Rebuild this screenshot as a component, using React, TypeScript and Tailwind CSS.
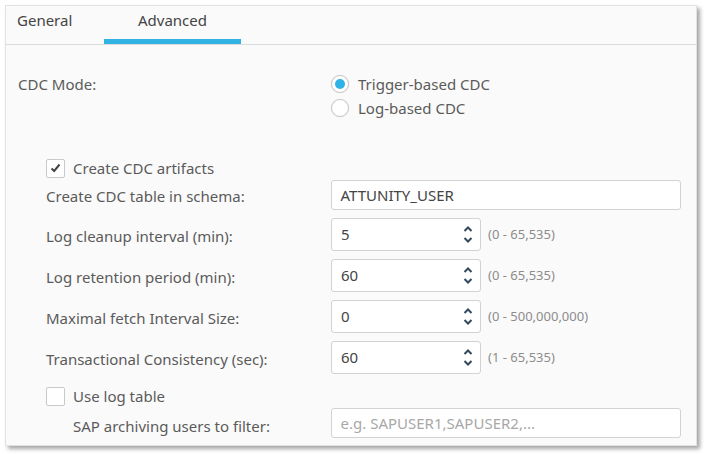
import React from 'react';

const font = { fontFamily: '"Noto Sans", "Open Sans", sans-serif' };

function Spinner() {
  return (
    <div className="flex flex-col items-center gap-[5px] mr-[7px]">
      <svg width="10" height="6" viewBox="0 0 10 6">
        <path d="M1.5 5 L5 1.5 L8.5 5" fill="none" stroke="#34495e" strokeWidth="2" />
      </svg>
      <svg width="10" height="6" viewBox="0 0 10 6">
        <path d="M1.5 1 L5 4.5 L8.5 1" fill="none" stroke="#34495e" strokeWidth="2" />
      </svg>
    </div>
  );
}

function Radio({ checked, label }: { checked?: boolean; label: string }) {
  return (
    <div className="flex items-center h-[24px]">
      <span className="w-[18px] h-[18px] rounded-full border border-[#c9c9c9] bg-white shadow-[0_0_1px_rgba(0,0,0,0.15)] flex items-center justify-center">
        {checked && <span className="w-[10px] h-[10px] rounded-full bg-[#2fb2e6]" />}
      </span>
      <span className="ml-[9px] text-[15px] text-[#5a5a5a]">{label}</span>
    </div>
  );
}

function Checkbox({ checked, label }: { checked?: boolean; label: string }) {
  return (
    <div className="flex items-center h-[24px]">
      <span className="w-[19px] h-[19px] rounded-[2px] border border-[#c9c9c9] bg-white flex items-center justify-center">
        {checked && (
          <svg width="11" height="10" viewBox="0 0 11 10">
            <path d="M1.5 5.5 L4.2 8 L9.5 1.5" fill="none" stroke="#444" strokeWidth="2" />
          </svg>
        )}
      </span>
      <span className="ml-[8px] text-[15px] text-[#5a5a5a]">{label}</span>
    </div>
  );
}

function NumberRow({ label, value, range }: { label: string; value: string; range: string }) {
  return (
    <div className="flex items-center h-[33px] mt-[8px]">
      <span className="w-[285px] text-[15px] text-[#5a5a5a] pt-[3px]">{label}</span>
      <div className="w-[150px] h-[33px] bg-white border border-[#d2d2d2] rounded-[3px] flex items-center justify-between pl-[9px]">
        <span className="text-[15px] text-[#444]">{value}</span>
        <Spinner />
      </div>
      <span className="ml-[7px] text-[13px] text-[#8c8c8c]">{range}</span>
    </div>
  );
}

export default function App() {
  return (
    <div className="w-[706px] h-[454px] bg-white pt-[5px] pl-[5px]" style={font}>
      <div className="w-[692px] h-[441px] bg-[#fafafa] border border-[#e2e2e2] shadow-[3px_3px_4px_rgba(0,0,0,0.35)]">
        <div className="flex h-[39px] border-b border-[#dcdcdc]">
          <div className="w-[98px] pl-[11px] pt-[3px] text-[15px] text-[#444]">General</div>
          <div className="w-[137px] flex flex-col items-center justify-between">
            <span className="pt-[3px] text-[15px] text-[#444]">Advanced</span>
            <span className="w-full h-[5px] bg-[#31b4e3]" />
          </div>
        </div>

        <div className="pl-[12px] pr-[15px]">
          <div className="flex mt-[27px]">
            <span className="w-[313px] h-[24px] flex items-center text-[15px] text-[#5a5a5a]">CDC Mode:</span>
            <div className="flex flex-col">
              <Radio checked label="Trigger-based CDC" />
              <Radio label="Log-based CDC" />
            </div>
          </div>

          <div className="pl-[28px] mt-[36px]">
            <Checkbox checked label="Create CDC artifacts" />
            <div className="flex items-center h-[30px]">
              <span className="w-[285px] text-[15px] text-[#5a5a5a] pt-[2px]">Create CDC table in schema:</span>
              <div className="w-[351px] h-[30px] bg-white border border-[#d2d2d2] rounded-[3px] flex items-center pl-[9px] text-[15px] text-[#444]">
                ATTUNITY_USER
              </div>
            </div>
            <NumberRow label="Log cleanup interval (min):" value="5" range="(0 - 65,535)" />
            <NumberRow label="Log retention period (min):" value="60" range="(0 - 65,535)" />
            <NumberRow label="Maximal fetch Interval Size:" value="0" range="(0 - 500,000,000)" />
            <NumberRow label="Transactional Consistency (sec):" value="60" range="(1 - 65,535)" />

            <div className="mt-[10px]">
              <Checkbox label="Use log table" />
            </div>
            <div className="flex items-center h-[30px]">
              <span className="w-[258px] ml-[27px] text-[15px] text-[#5a5a5a] pt-[6px]">SAP archiving users to filter:</span>
              <div className="w-[351px] h-[30px] bg-white border border-[#d2d2d2] rounded-[3px] flex items-center pl-[9px] text-[15px] text-[#a8a8a8]">
                e.g. SAPUSER1,SAPUSER2,...
              </div>
            </div>
          </div>
        </div>
      </div>
    </div>
  );
}
